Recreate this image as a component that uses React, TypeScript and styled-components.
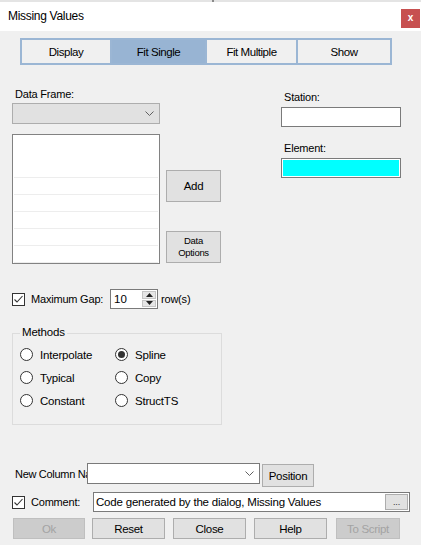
import styled, { createGlobalStyle } from 'styled-components';

const GlobalStyle = createGlobalStyle`
	html, body {
		margin: 0;
		padding: 0;
		background: #f0f0f0;
	}
	body {
		font-family: 'Liberation Sans', Arial, sans-serif;
		font-size: 11px;
		color: #000;
	}
	* {
		box-sizing: border-box;
	}
`;

const tabs = ['Display', 'Fit Single', 'Fit Multiple', 'Show'];
const methods = [
	['Interpolate', 'Spline'],
	['Typical', 'Copy'],
	['Constant', 'StructTS'],
];

const Check = () => (
	<CheckBox>
		<svg width='11' height='11' viewBox='0 0 11 11'>
			<path d='M1.5 5.5 L4 8 L9.5 2' fill='none' stroke='#333' strokeWidth='1.1' />
		</svg>
	</CheckBox>
);

const Chevron = () => (
	<svg width='9' height='5' viewBox='0 0 9 5'>
		<path d='M0.5 0.5 L4.5 4.5 L8.5 0.5' fill='none' stroke='#606060' strokeWidth='1' />
	</svg>
);

const App = () => {
	return (
		<SWindow>
			<GlobalStyle />
			<TopStrip>
				<span />
			</TopStrip>
			<TitleBar>
				<Title>Missing Values</Title>
				<CloseButton>x</CloseButton>
			</TitleBar>
			<Body>
				<TabBar>
					{tabs.map((t) => (
						<Tab key={t} $active={t === 'Fit Single'}>
							{t}
						</Tab>
					))}
				</TabBar>

				<MainSection>
					<LeftColumn>
						<FieldLabel>Data Frame:</FieldLabel>
						<DisabledCombo>
							<Chevron />
						</DisabledCombo>
						<ListRow>
							<ListBox>
								{[0, 1, 2, 3, 4, 5].map((i) => (
									<ListLine key={i} />
								))}
							</ListBox>
							<SideButtons>
								<Button $w={55} $h={32}>
									Add
								</Button>
								<Button $w={55} $h={32} $small>
									Data
									<br />
									Options
								</Button>
							</SideButtons>
						</ListRow>
					</LeftColumn>
					<RightColumn>
						<ReceiverLabel>Station:</ReceiverLabel>
						<Receiver />
						<ReceiverLabel $top={15}>Element:</ReceiverLabel>
						<Receiver $selected />
					</RightColumn>
				</MainSection>

				<GapRow>
					<Check />
					<InlineLabel $w={85}>Maximum Gap:</InlineLabel>
					<Spinner>
						<SpinValue>10</SpinValue>
						<SpinButtons>
							<SpinArrow>
								<svg width='7' height='4' viewBox='0 0 7 4'>
									<path d='M0 4 L3.5 0 L7 4 Z' fill='#222' />
								</svg>
							</SpinArrow>
							<SpinArrow>
								<svg width='7' height='4' viewBox='0 0 7 4'>
									<path d='M0 0 L3.5 4 L7 0 Z' fill='#222' />
								</svg>
							</SpinArrow>
						</SpinButtons>
					</Spinner>
					<InlineLabel $w={40} $left={3}>
						row(s)
					</InlineLabel>
				</GapRow>

				<GroupBox>
					<GroupTitle>Methods</GroupTitle>
					<RadioGrid>
						{methods.flatMap(([a, b]) => [
							<RadioItem key={a}>
								<Radio />
								<span>{a}</span>
							</RadioItem>,
							<RadioItem key={b}>
								<Radio $checked={b === 'Spline'} />
								<span>{b}</span>
							</RadioItem>,
						])}
					</RadioGrid>
				</GroupBox>

				<Footer>
					<ColumnRow>
						<ColumnLabel>New Column Name:</ColumnLabel>
						<Combo>
							<Chevron />
						</Combo>
						<Button $w={52} $h={23} $top={1}>
							Position
						</Button>
					</ColumnRow>
					<CommentRow>
						<Check />
						<InlineLabel $w={68}>Comment:</InlineLabel>
						<CommentBox>
							<span>Code generated by the dialog, Missing Values</span>
							<DotsButton>...</DotsButton>
						</CommentBox>
					</CommentRow>
					<ButtonRow>
						<Button $w={72} $h={21} $disabled>
							Ok
						</Button>
						<Button $w={73} $h={21}>
							Reset
						</Button>
						<Button $w={73} $h={21}>
							Close
						</Button>
						<Button $w={73} $h={21}>
							Help
						</Button>
						<Button $w={64} $h={21} $disabled>
							To Script
						</Button>
					</ButtonRow>
				</Footer>
			</Body>
		</SWindow>
	);
};

export default App;

const SWindow = styled.div`
	width: 421px;
	height: 545px;
	display: flex;
	flex-direction: column;
	background: #f0f0f0;
	overflow: hidden;
`;

const TopStrip = styled.div`
	height: 2px;
	background: #e4e4e4;
	position: relative;

	span {
		position: absolute;
		left: 212px;
		top: 0;
		width: 2px;
		height: 2px;
		background: #8a8a8a;
	}
`;

const TitleBar = styled.div`
	height: 29px;
	background: #fff;
	display: flex;
	align-items: center;
	justify-content: space-between;
	padding: 0 1px 0 8px;
`;

const Title = styled.div`
	font-family: 'Liberation Sans', Arial, sans-serif;
	font-size: 12px;
	letter-spacing: -0.3px;
	color: #000;
	margin-top: -1px;
`;

const CloseButton = styled.div`
	width: 19px;
	height: 19px;
	background: #c75050;
	color: #fff;
	font-weight: bold;
	font-size: 10px;
	display: flex;
	align-items: center;
	justify-content: center;
	margin-top: 4px;
	padding-bottom: 2px;
`;

const Body = styled.div`
	flex: 1;
	display: flex;
	flex-direction: column;
	padding: 7px 0 6px 0;
`;

const TabBar = styled.div`
	margin-left: 20px;
	width: 372px;
	height: 27px;
	display: grid;
	grid-template-columns: 88px 93px 89px 92px;
	border: 2px solid #9bb6d4;
	background: #9bb6d4;
	gap: 2px;
`;

const Tab = styled.div<{ $active?: boolean }>`
	background: ${(p) => (p.$active ? '#98b4d3' : '#f0f0f0')};
	display: flex;
	align-items: center;
	justify-content: center;
	font-size: 11.5px;
	letter-spacing: -0.45px;
	padding-top: 1px;
`;

const MainSection = styled.div`
	display: flex;
	gap: 60px;
	margin: 23px 0 0 12px;
`;

const LeftColumn = styled.div`
	width: 209px;
	display: flex;
	flex-direction: column;
`;

const FieldLabel = styled.div`
	height: 13px;
	line-height: 13px;
	padding-left: 3px;
	letter-spacing: -0.2px;
`;

const DisabledCombo = styled.div`
	margin-top: 2px;
	width: 148px;
	height: 21px;
	background: #e1e1e1;
	border: 1px solid #adadad;
	display: flex;
	align-items: center;
	justify-content: flex-end;
	padding-right: 5px;
`;

const ListRow = styled.div`
	display: flex;
	gap: 6px;
	margin-top: 10px;
`;

const ListBox = styled.div`
	width: 148px;
	height: 130px;
	background: #fff;
	border: 1px solid #828282;
	padding: 42px 1px 0 1px;
	display: flex;
	flex-direction: column;
	gap: 16px;
`;

const ListLine = styled.div`
	height: 1px;
	background: #ededed;
`;

const SideButtons = styled.div`
	display: flex;
	flex-direction: column;
	gap: 29px;
	padding-top: 36px;
`;

const Button = styled.div<{ $w: number; $h: number; $small?: boolean; $disabled?: boolean; $top?: number }>`
	width: ${(p) => p.$w}px;
	height: ${(p) => p.$h}px;
	margin-top: ${(p) => p.$top || 0}px;
	background: ${(p) => (p.$disabled ? '#cccccc' : '#e1e1e1')};
	border: 1px solid ${(p) => (p.$disabled ? '#bfbfbf' : '#adadad')};
	color: ${(p) => (p.$disabled ? '#a3a3a3' : '#000')};
	font-size: ${(p) => (p.$small ? '9.5px' : '11.5px')};
	line-height: ${(p) => (p.$small ? '12px' : 'normal')};
	letter-spacing: -0.3px;
	display: flex;
	align-items: center;
	justify-content: center;
	text-align: center;
	flex-shrink: 0;
`;

const RightColumn = styled.div`
	width: 120px;
	display: flex;
	flex-direction: column;
	padding-top: 3px;
`;

const ReceiverLabel = styled.div<{ $top?: number }>`
	height: 13px;
	line-height: 13px;
	padding-left: 3px;
	margin-top: ${(p) => p.$top || 0}px;
	margin-bottom: 3px;
	letter-spacing: -0.2px;
`;

const Receiver = styled.div<{ $selected?: boolean }>`
	width: 120px;
	height: 20px;
	border: 1px solid #7a7a7a;
	background: ${(p) => (p.$selected ? '#00ffff' : '#fff')};
	box-shadow: ${(p) => (p.$selected ? 'inset 0 0 0 1px #fff' : 'none')};
`;

const GapRow = styled.div`
	display: flex;
	align-items: center;
	margin: 25px 0 0 12px;
	height: 20px;
`;

const CheckBox = styled.div`
	width: 13px;
	height: 13px;
	border: 1px solid #333;
	background: #fff;
	display: flex;
	align-items: center;
	justify-content: center;
	flex-shrink: 0;
`;

const InlineLabel = styled.div<{ $w: number; $left?: number }>`
	width: ${(p) => p.$w}px;
	padding-left: ${(p) => (p.$left !== undefined ? p.$left : 6)}px;
	letter-spacing: -0.2px;
	white-space: nowrap;
	flex-shrink: 0;
`;

const Spinner = styled.div`
	width: 48px;
	height: 20px;
	background: #fff;
	border: 1px solid #7a7a7a;
	display: flex;
	justify-content: space-between;
	padding: 1px;
`;

const SpinValue = styled.div`
	padding: 2px 0 0 2px;
	font-size: 11.5px;
`;

const SpinButtons = styled.div`
	width: 14px;
	display: flex;
	flex-direction: column;
	gap: 1px;
`;

const SpinArrow = styled.div`
	flex: 1;
	background: #e6e6e6;
	border: 1px solid #c5c5c5;
	display: flex;
	align-items: center;
	justify-content: center;
`;

const GroupBox = styled.div`
	position: relative;
	margin: 24px 0 0 12px;
	width: 210px;
	height: 92px;
	border: 1px solid #dcdcdc;
	padding: 9px 0 0 7px;
`;

const GroupTitle = styled.div`
	position: absolute;
	top: -8px;
	left: 7px;
	padding: 0 2px;
	background: #f0f0f0;
	font-size: 11.5px;
	letter-spacing: -0.2px;
`;

const RadioGrid = styled.div`
	display: grid;
	grid-template-columns: 95px 100px;
	grid-auto-rows: 23px;
`;

const RadioItem = styled.div`
	display: flex;
	align-items: center;
	gap: 7px;
	letter-spacing: -0.2px;
	font-size: 11.5px;
`;

const Radio = styled.div<{ $checked?: boolean }>`
	width: 13px;
	height: 13px;
	border-radius: 50%;
	border: 1px solid #333;
	background: #fff;
	display: flex;
	align-items: center;
	justify-content: center;

	&::after {
		content: '';
		display: ${(p) => (p.$checked ? 'block' : 'none')};
		width: 7px;
		height: 7px;
		border-radius: 50%;
		background: #333;
	}
`;

const Footer = styled.div`
	margin-top: auto;
	display: flex;
	flex-direction: column;
`;

const ColumnRow = styled.div`
	display: flex;
	align-items: flex-start;
	margin-left: 15px;
	height: 24px;

	& > div:last-child {
		margin-left: 2px;
	}
`;

const ColumnLabel = styled.div`
	width: 72px;
	overflow: hidden;
	white-space: nowrap;
	padding-top: 5px;
	letter-spacing: -0.3px;
`;

const Combo = styled.div`
	width: 173px;
	height: 21px;
	background: #fff;
	border: 1px solid #7a7a7a;
	display: flex;
	align-items: center;
	justify-content: flex-end;
	padding-right: 5px;
`;

const CommentRow = styled.div`
	display: flex;
	align-items: center;
	margin: 5px 0 0 12px;
	height: 20px;
`;

const CommentBox = styled.div`
	width: 317px;
	height: 20px;
	background: #fff;
	border: 1px solid #7a7a7a;
	display: flex;
	align-items: center;
	justify-content: space-between;
	padding: 0 1px 0 2px;
	font-size: 11.5px;
	letter-spacing: -0.2px;
`;

const DotsButton = styled.div`
	width: 23px;
	height: 16px;
	background: #e1e1e1;
	border: 1px solid #adadad;
	display: flex;
	align-items: flex-end;
	justify-content: center;
	font-size: 9px;
	padding-bottom: 2px;
	color: #333;
`;

const ButtonRow = styled.div`
	display: flex;
	margin: 6px 0 0 13px;
	gap: 8px;

	& > div:nth-child(2) {
		margin-left: -1px;
	}
	& > div:nth-child(5) {
		margin-left: 1px;
	}
`;
